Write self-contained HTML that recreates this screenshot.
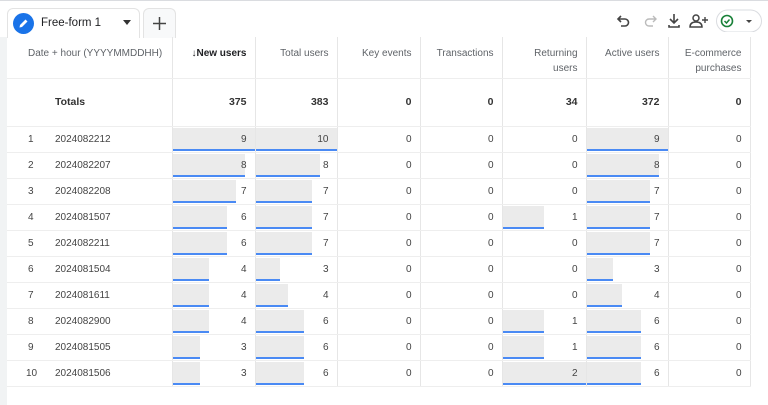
<!DOCTYPE html>
<html><head><meta charset="utf-8"><style>
*{box-sizing:border-box;margin:0;padding:0}
body{width:768px;height:405px;overflow:hidden;background:#fff;font-family:"Liberation Sans",Arial,sans-serif;position:relative}
.strip{position:absolute;left:0;top:37px;width:7px;height:368px;background:#f1f3f4}
.top{position:absolute;left:0;top:0;width:768px;height:37px;background:#fff;border-top:1px solid #dadce0}
.tab{position:absolute;top:8px;height:30px;background:#fff;border:1px solid #e3e3e3;border-bottom:none;border-radius:6px 6px 0 0}
table{border-collapse:collapse;table-layout:fixed;position:absolute;left:7px;top:37px;font-size:10px;color:#3c4043}
td,th{border-right:1px solid #e6e6e6;border-bottom:1px solid #eee;padding:0 8px;text-align:right;position:relative;white-space:nowrap}
th{font-weight:normal;color:#5f6368;height:41px;vertical-align:top;padding-top:9px;line-height:15px}
tr.tot td{height:48px;font-weight:bold;color:#333;font-size:10.5px}
tr.r td{height:26px;color:#444}
td.b{padding:0}
td.b .g{position:absolute;left:0;top:1px;bottom:1px;background:#ebebeb;border-bottom:2px solid #4a8af4}
td.b span{position:relative;padding-right:8px;display:block;text-align:right}
</style></head><body>
<div class="top"></div>
<div class="strip"></div>
<div class="tab" style="left:7px;width:133px">
 <div style="position:absolute;left:5px;top:4px;width:21px;height:21px;border-radius:50%;background:#1a73e8"></div>
 <svg style="position:absolute;left:10px;top:9px" width="11" height="11" viewBox="0 0 11 11"><path d="M1.5 9.5 L2 7 L7.5 1.5 L9.5 3.5 L4 9 Z" fill="#fff"/></svg>
 <span style="position:absolute;left:33px;top:8px;font-size:11.5px;color:#202124">Free-form 1</span>
 <svg style="position:absolute;left:115px;top:11px" width="8" height="5"><path d="M0 0H8L4 5Z" fill="#333"/></svg>
</div>
<div class="tab" style="left:143px;width:33px;background:#f8f9fa">
 <svg style="position:absolute;left:9px;top:8px" width="13" height="13"><path d="M6.5 0V13M0 6.5H13" stroke="#444" stroke-width="1.5"/></svg>
</div>
<svg style="position:absolute;left:616px;top:8px" width="150" height="24" viewBox="0 -4 150 24">
 <path d="M5 4 L2 7 L5 10 M2 7 H9 A3.5 3.5 0 0 1 9 14 H5" fill="none" stroke="#444" stroke-width="1.6"/>
 <path d="M37 4 L40 7 L37 10 M40 7 H33 A3.5 3.5 0 0 0 33 14 H37" fill="none" stroke="#bbb" stroke-width="1.4"/>
 <path d="M58 2 V11 M54 7 L58 11 L62 7 M53 13 V15 H63 V13" fill="none" stroke="#444" stroke-width="1.6"/>
 <circle cx="80" cy="6" r="3" fill="none" stroke="#444" stroke-width="1.5"/>
 <path d="M74 15 Q74 10 80 10 Q86 10 86 15 Z" fill="none" stroke="#444" stroke-width="1.5"/>
 <path d="M89 5 V11 M86 8 H92" stroke="#444" stroke-width="1.4"/>
 <rect x="100.5" y="-2" width="45" height="22" rx="11" fill="#fff" stroke="#dadce0"/>
 <circle cx="111" cy="9" r="5.5" fill="none" stroke="#188038" stroke-width="1.6"/>
 <path d="M108.5 9 L110.5 11 L113.5 7.5" fill="none" stroke="#188038" stroke-width="1.5"/>
 <path d="M130 8 H136 L133 11 Z" fill="#444"/>
</svg>
<table>
<colgroup><col style="width:165px"><col style="width:83px"><col style="width:82px"><col style="width:83px"><col style="width:82px"><col style="width:84px"><col style="width:82px"><col style="width:82px"></colgroup>
<tr><th style="text-align:left;padding-left:21px">Date + hour (YYYYMMDDHH)</th><th style="color:#202124;font-weight:bold">&#8595;New users</th><th>Total users</th><th>Key events</th><th>Transactions</th><th>Returning<br>users</th><th>Active users</th><th>E-commerce<br>purchases</th></tr>
<tr class="tot"><td style="text-align:left;padding-left:48px">Totals</td><td>375</td><td>383</td><td>0</td><td>0</td><td>34</td><td>372</td><td>0</td></tr>
<tr class="r"><td style="text-align:left;padding-left:21px">1<span style="position:absolute;left:48px">2024082212</span></td><td class="b"><div class="g" style="width:100%"></div><span>9</span></td><td class="b"><div class="g" style="width:100%"></div><span>10</span></td><td>0</td><td>0</td><td>0</td><td class="b"><div class="g" style="width:100%"></div><span>9</span></td><td>0</td></tr>
<tr class="r"><td style="text-align:left;padding-left:21px">2<span style="position:absolute;left:48px">2024082207</span></td><td class="b"><div class="g" style="width:89%"></div><span>8</span></td><td class="b"><div class="g" style="width:80%"></div><span>8</span></td><td>0</td><td>0</td><td>0</td><td class="b"><div class="g" style="width:89%"></div><span>8</span></td><td>0</td></tr>
<tr class="r"><td style="text-align:left;padding-left:21px">3<span style="position:absolute;left:48px">2024082208</span></td><td class="b"><div class="g" style="width:78%"></div><span>7</span></td><td class="b"><div class="g" style="width:70%"></div><span>7</span></td><td>0</td><td>0</td><td>0</td><td class="b"><div class="g" style="width:78%"></div><span>7</span></td><td>0</td></tr>
<tr class="r"><td style="text-align:left;padding-left:21px">4<span style="position:absolute;left:48px">2024081507</span></td><td class="b"><div class="g" style="width:67%"></div><span>6</span></td><td class="b"><div class="g" style="width:70%"></div><span>7</span></td><td>0</td><td>0</td><td class="b"><div class="g" style="width:50%"></div><span>1</span></td><td class="b"><div class="g" style="width:78%"></div><span>7</span></td><td>0</td></tr>
<tr class="r"><td style="text-align:left;padding-left:21px">5<span style="position:absolute;left:48px">2024082211</span></td><td class="b"><div class="g" style="width:67%"></div><span>6</span></td><td class="b"><div class="g" style="width:70%"></div><span>7</span></td><td>0</td><td>0</td><td>0</td><td class="b"><div class="g" style="width:78%"></div><span>7</span></td><td>0</td></tr>
<tr class="r"><td style="text-align:left;padding-left:21px">6<span style="position:absolute;left:48px">2024081504</span></td><td class="b"><div class="g" style="width:44%"></div><span>4</span></td><td class="b"><div class="g" style="width:30%"></div><span>3</span></td><td>0</td><td>0</td><td>0</td><td class="b"><div class="g" style="width:33%"></div><span>3</span></td><td>0</td></tr>
<tr class="r"><td style="text-align:left;padding-left:21px">7<span style="position:absolute;left:48px">2024081611</span></td><td class="b"><div class="g" style="width:44%"></div><span>4</span></td><td class="b"><div class="g" style="width:40%"></div><span>4</span></td><td>0</td><td>0</td><td>0</td><td class="b"><div class="g" style="width:44%"></div><span>4</span></td><td>0</td></tr>
<tr class="r"><td style="text-align:left;padding-left:21px">8<span style="position:absolute;left:48px">2024082900</span></td><td class="b"><div class="g" style="width:44%"></div><span>4</span></td><td class="b"><div class="g" style="width:60%"></div><span>6</span></td><td>0</td><td>0</td><td class="b"><div class="g" style="width:50%"></div><span>1</span></td><td class="b"><div class="g" style="width:67%"></div><span>6</span></td><td>0</td></tr>
<tr class="r"><td style="text-align:left;padding-left:21px">9<span style="position:absolute;left:48px">2024081505</span></td><td class="b"><div class="g" style="width:33%"></div><span>3</span></td><td class="b"><div class="g" style="width:60%"></div><span>6</span></td><td>0</td><td>0</td><td class="b"><div class="g" style="width:50%"></div><span>1</span></td><td class="b"><div class="g" style="width:67%"></div><span>6</span></td><td>0</td></tr>
<tr class="r"><td style="text-align:left;padding-left:19px">10<span style="position:absolute;left:48px">2024081506</span></td><td class="b"><div class="g" style="width:33%"></div><span>3</span></td><td class="b"><div class="g" style="width:60%"></div><span>6</span></td><td>0</td><td>0</td><td class="b"><div class="g" style="width:100%"></div><span>2</span></td><td class="b"><div class="g" style="width:67%"></div><span>6</span></td><td>0</td></tr>
</table>
</body></html>
